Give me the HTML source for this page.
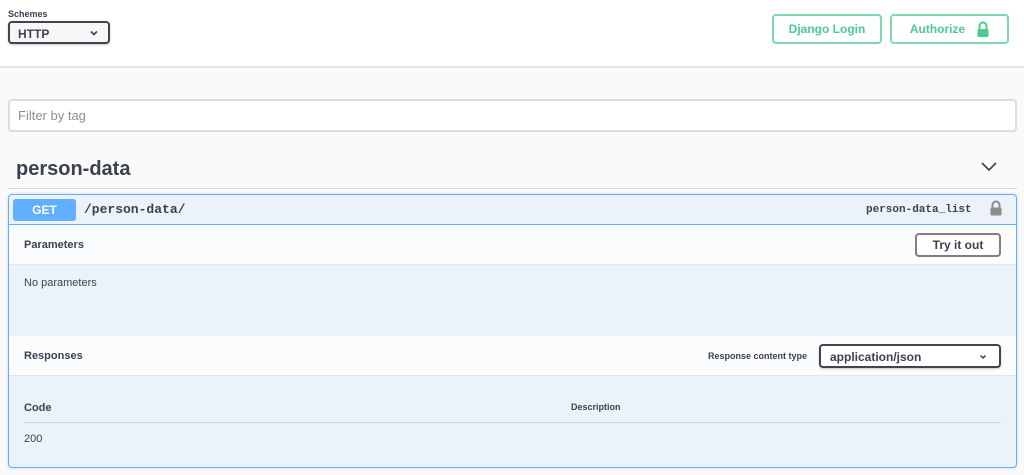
<!DOCTYPE html>
<html><head><meta charset="utf-8"><style>
*{box-sizing:border-box;margin:0;padding:0}
body{width:1024px;height:475px;overflow:hidden;background:#fafafa;font-family:"Liberation Sans",Arial,sans-serif;color:#3b4151;position:relative}
.a{position:absolute}
.top{left:0;top:0;width:1024px;height:68px;background:#fff;border-bottom:2px solid #e6e6e6}
.sel{border:2px solid #41444e;border-radius:4px;background:#f7f7f7;box-shadow:0 1px 2px rgba(0,0,0,.2);font-weight:bold;font-size:12px;color:#3b4151}
.gbtn{border:2px solid #7fd8ab;border-radius:4px;color:#49cc90;font-weight:bold;font-size:12px;display:flex;align-items:center;justify-content:center;background:#fff}
.mono{font-family:"Liberation Mono",monospace;font-weight:bold}
.b{font-weight:bold;font-size:11px}
</style></head><body>
<div class="a top"></div>
<div class="a b" style="left:8px;top:9px;font-size:9px;color:#3b4151">Schemes</div>
<div class="a sel" style="left:8px;top:21px;width:102px;height:23px;padding:4px 8px">HTTP
<svg class="a" style="left:79px;top:6px" width="10" height="8" viewBox="0 0 10 8"><path d="M2 2.5 L5 5.5 L8 2.5" stroke="#3b4151" stroke-width="1.6" fill="none"/></svg></div>
<div class="a gbtn" style="left:772px;top:14px;width:110px;height:30px">Django Login</div>
<div class="a gbtn" style="left:890px;top:14px;width:119px;height:30px"><span style="margin-right:24px">Authorize</span>
<svg class="a" style="left:84px;top:5px" width="14" height="17" viewBox="0 0 14 17"><path d="M3.5 8 V5 a3.5 3.5 0 0 1 7 0 V8" stroke="#49cc90" stroke-width="2" fill="none"/><rect x="1.5" y="8" width="11" height="8" rx="1.5" fill="#49cc90"/></svg></div>
<div class="a" style="left:8px;top:99px;width:1009px;height:33px;background:#fff;border:2px solid #d8dde7;border-radius:4px;font-size:13px;color:#8f8f8f;padding:7px 8px">Filter by tag</div>
<div class="a" style="left:16px;top:158px;font-size:20px;font-weight:bold;color:#3b4151">person-data</div>
<svg class="a" style="left:980px;top:160px" width="18" height="12" viewBox="0 0 18 12"><path d="M2 3 L9 10 L16 3" stroke="#3b4151" stroke-width="1.6" fill="none"/></svg>
<div class="a" style="left:8px;top:188px;width:1009px;height:1px;background:#d4d6db"></div>
<div class="a" style="left:8px;top:194px;width:1009px;height:274px;background:#ebf2fa;border:1px solid #61affe;border-radius:4px;box-shadow:0 0 3px rgba(0,0,0,.15)"></div>
<div class="a" style="left:9px;top:224px;width:1007px;height:1px;background:#61affe"></div>
<div class="a" style="left:13px;top:199px;width:63px;height:22px;background:#61affe;border-radius:3px;color:#fff;font-weight:bold;font-size:12px;text-align:center;line-height:22px">GET</div>
<div class="a mono" style="left:84px;top:202px;font-size:13px;color:#3b4151">/person-data/</div>
<div class="a mono" style="left:866px;top:204px;font-size:11px;color:#3b4151">person-data_list</div>
<svg class="a" style="left:989px;top:200px" width="14" height="16" viewBox="0 0 14 16"><path d="M3.5 8 V5 a3.5 3.5 0 0 1 7 0 V8" stroke="#8c8c8c" stroke-width="2" fill="none"/><rect x="1.5" y="7.5" width="11" height="8" rx="1.5" fill="#8c8c8c"/></svg>
<div class="a" style="left:9px;top:225px;width:1007px;height:40px;background:#fbfcfe;border-bottom:1px solid #e2e6ec"></div>
<div class="a b" style="left:24px;top:239px">Parameters</div>
<div class="a" style="left:915px;top:233px;width:86px;height:24px;border:2px solid #808080;border-radius:4px;background:#fff;font-weight:bold;font-size:12px;text-align:center;line-height:20px;color:#3b4151">Try it out</div>
<div class="a" style="left:24px;top:277px;font-size:11px">No parameters</div>
<div class="a" style="left:9px;top:336px;width:1007px;height:40px;background:#fbfcfe;border-bottom:1px solid #e2e6ec"></div>
<div class="a b" style="left:24px;top:350px">Responses</div>
<div class="a b" style="left:708px;top:351px;font-size:9px">Response content type</div>
<div class="a sel" style="left:819px;top:344px;width:182px;height:24px;padding:4px 9px;font-size:12px;background:#fff">application/json
<svg class="a" style="left:157px;top:7px" width="10" height="8" viewBox="0 0 10 8"><path d="M2.5 2.5 L5 5 L7.5 2.5" stroke="#3b4151" stroke-width="1.5" fill="none"/></svg></div>
<div class="a b" style="left:24px;top:402px">Code</div>
<div class="a b" style="left:571px;top:402px;font-size:9px">Description</div>
<div class="a" style="left:24px;top:422px;width:977px;height:1px;background:#cfd3da"></div>
<div class="a" style="left:24px;top:433px;font-size:11px">200</div>
</body></html>
